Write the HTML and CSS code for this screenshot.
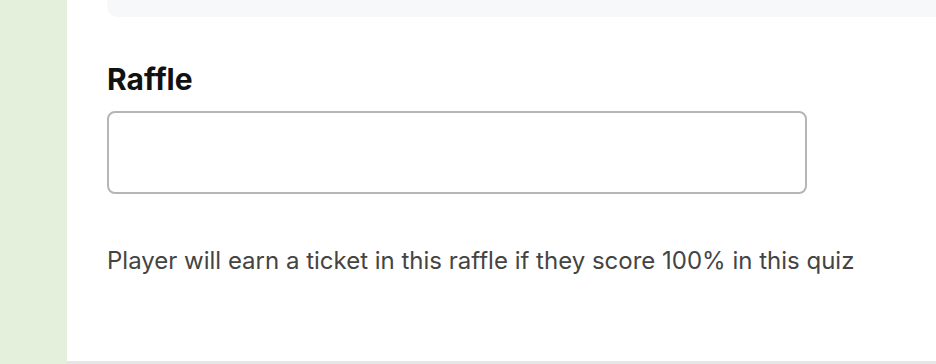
FILE: index.html
```html
<!DOCTYPE html>
<html lang="en">
<head>
    <meta charset="UTF-8">
    <meta name="viewport" content="width=device-width, initial-scale=1.0">
    <title>Quiz settings</title>
    <link rel="stylesheet" href="styles.css">
</head>
<body>
    <div class="layout">
        <aside class="sidebar"></aside>
        <main class="main">
            <div class="summary-box"></div>
            <section class="field">
                <h2 class="field-label">Raffle</h2>
                <input class="field-input" type="text">
                <p class="field-help">Player will earn a ticket in this raffle if they score 100% in this quiz</p>
            </section>
        </main>
    </div>
</body>
</html>
```

FILE: styles.css
```css
html, body {
    margin: 0;
    height: 100%;
}
body {
    font-family: Inter, "Noto Sans", sans-serif;
    background: #fff;
    color: #111;
}
.layout {
    display: flex;
    height: 364px;
    overflow: hidden;
}
.sidebar {
    width: 67px;
    flex-shrink: 0;
    background: #e5f0dc;
}
.main {
    flex: 1;
    padding-left: 40px;
    border-bottom: 3px solid #e6e6e6;
    box-sizing: border-box;
}
.summary-box {
    height: 17px;
    background: #f7f8fa;
    border-bottom-left-radius: 10px;
}
.field {
    padding-top: 42px;
}
.field-label {
    margin: 0;
    font-size: 30px;
    font-weight: 700;
    line-height: 40px;
    color: #111;
}
.field-input {
    display: block;
    box-sizing: border-box;
    width: 700px;
    height: 83px;
    margin-top: 12px;
    border: 2px solid #b5b5b5;
    border-radius: 8px;
    background: #fff;
    font: inherit;
}
.field-help {
    margin: 49px 0 0;
    font-size: 24px;
    line-height: 36px;
    color: #444;
}
```
